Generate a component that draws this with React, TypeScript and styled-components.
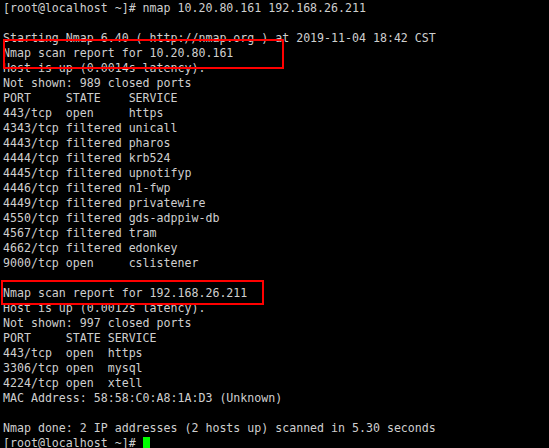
import React from "react";
import styled, { createGlobalStyle } from "styled-components";

const Global = createGlobalStyle`
  html, body { margin: 0; padding: 0; background: #000; }
  body { width: 549px; height: 448px; overflow: hidden; }
`;

const Screen = styled.div`
  position: relative;
  width: 549px;
  height: 448px;
  background: #000;
  overflow: hidden;
  padding: 1px 0 0 3px;
  box-sizing: border-box;
`;

const Output = styled.pre`
  margin: 0;
  font-family: "DejaVu Sans Mono", "Liberation Mono", monospace;
  font-size: 11.6px;
  line-height: 15px;
  color: #cfcfcf;
  white-space: pre;
`;

const Cursor = styled.span`
  display: inline-block;
  width: 7px;
  height: 12px;
  background: #00ff00;
  vertical-align: -2px;
`;

const Highlight = styled.div<{ $x: number; $y: number; $w: number; $h: number }>`
  position: absolute;
  left: ${(p) => p.$x}px;
  top: ${(p) => p.$y}px;
  width: ${(p) => p.$w}px;
  height: ${(p) => p.$h}px;
  border: 2px solid #ff0000;
  box-sizing: border-box;
  pointer-events: none;
`;

const lines = [
  "[root@localhost ~]# nmap 10.20.80.161 192.168.26.211",
  "",
  "Starting Nmap 6.40 ( http://nmap.org ) at 2019-11-04 18:42 CST",
  "Nmap scan report for 10.20.80.161",
  "Host is up (0.0014s latency).",
  "Not shown: 989 closed ports",
  "PORT     STATE    SERVICE",
  "443/tcp  open     https",
  "4343/tcp filtered unicall",
  "4443/tcp filtered pharos",
  "4444/tcp filtered krb524",
  "4445/tcp filtered upnotifyp",
  "4446/tcp filtered n1-fwp",
  "4449/tcp filtered privatewire",
  "4550/tcp filtered gds-adppiw-db",
  "4567/tcp filtered tram",
  "4662/tcp filtered edonkey",
  "9000/tcp open     cslistener",
  "",
  "Nmap scan report for 192.168.26.211",
  "Host is up (0.0012s latency).",
  "Not shown: 997 closed ports",
  "PORT     STATE SERVICE",
  "443/tcp  open  https",
  "3306/tcp open  mysql",
  "4224/tcp open  xtell",
  "MAC Address: 58:58:C0:A8:1A:D3 (Unknown)",
  "",
  "Nmap done: 2 IP addresses (2 hosts up) scanned in 5.30 seconds",
];

export default function App() {
  return (
    <>
      <Global />
      <Screen>
        <Output>
          {lines.join("\n")}
          {"\n[root@localhost ~]# "}
          <Cursor />
        </Output>
        <Highlight $x={3} $y={39} $w={281} $h={30} />
        <Highlight $x={1} $y={280} $w={263} $h={25} />
      </Screen>
    </>
  );
}
